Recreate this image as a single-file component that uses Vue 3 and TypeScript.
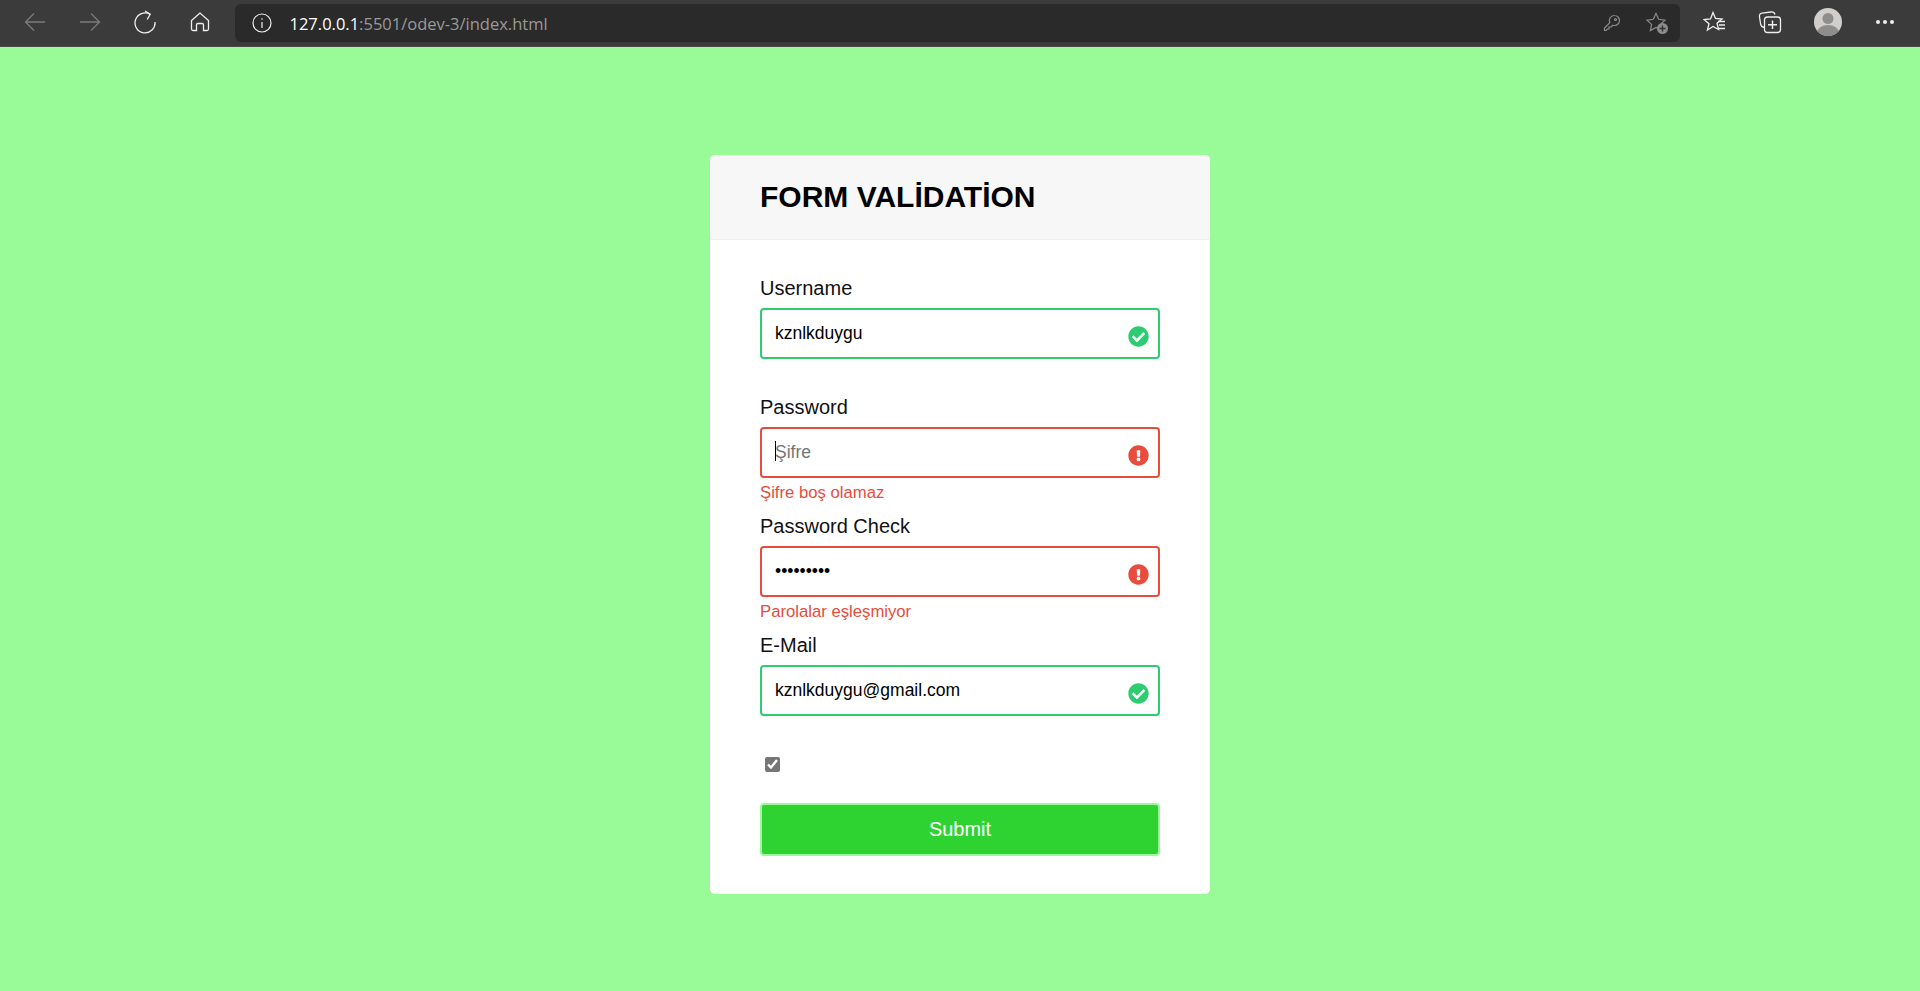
<script setup lang="ts">
interface Field {
  label: string
  type: string
  value: string
  placeholder?: string
  state: 'ok' | 'bad'
  error?: string
  caret?: boolean
}
const fields: Field[] = [
  { label: 'Username', type: 'text', value: 'kznlkduygu', state: 'ok' },
  { label: 'Password', type: 'password', value: '', placeholder: 'Şifre', state: 'bad', error: 'Şifre boş olamaz', caret: true },
  { label: 'Password Check', type: 'password', value: 'abcdefghi', state: 'bad', error: 'Parolalar eşleşmiyor' },
  { label: 'E-Mail', type: 'email', value: 'kznlkduygu@gmail.com', state: 'ok' },
]
const okPath = 'M504 256c0 136.967-111.033 248-248 248S8 392.967 8 256 119.033 8 256 8s248 111.033 248 248zM227.314 387.314l184-184c6.248-6.248 6.248-16.379 0-22.627l-22.627-22.627c-6.248-6.249-16.379-6.249-22.628 0L216 308.118l-70.059-70.059c-6.248-6.248-16.379-6.248-22.628 0l-22.627 22.627c-6.248 6.248-6.248 16.379 0 22.627l104 104c6.249 6.249 16.379 6.249 22.628.001z'
const badPath = 'M504 256c0 136.997-111.043 248-248 248S8 392.997 8 256C8 119.083 119.043 8 256 8s248 111.083 248 248zm-248 50c-25.405 0-46 20.595-46 46s20.595 46 46 46 46-20.595 46-46-20.595-46-46-46zm-43.673-165.346l7.418 136c.347 6.364 5.609 11.346 11.982 11.346h48.546c6.373 0 11.635-4.982 11.982-11.346l7.418-136c.375-6.874-5.098-12.654-11.982-12.654h-63.383c-6.884 0-12.356 5.78-11.981 12.654z'
</script>

<template>
  <div class="page">
    <header class="toolbar">
      <div class="nav">
        <span class="tb"><svg width="24" height="24" viewBox="0 0 24 24" fill="none" stroke="#7b7b7b" stroke-width="1.3"><path d="M22 12H2.5M11 3.5 2.5 12l8.500 8.500" /></svg></span>
        <span class="tb"><svg width="24" height="24" viewBox="0 0 24 24" fill="none" stroke="#7b7b7b" stroke-width="1.3"><path d="M2 12h19.500M13 3.500l8.500 8.500-8.500 8.500" /></svg></span>
        <span class="tb"><svg width="24" height="24" viewBox="0 0 24 24" fill="none" stroke="#eee" stroke-width="1.3"><path d="M17 4.200A10 10 0 1 0 22 12" /><path d="M12 1l5.200 3.200-3 5.300" /></svg></span>
        <span class="tb"><svg width="22" height="22" viewBox="0 0 22 22" fill="none" stroke="#eee" stroke-width="1.300"><path d="M11 2 2.500 9.500V18a1.500 1.500 0 0 0 1.500 1.500h3.500V14a1.500 1.500 0 0 1 1.500-1.500h4a1.500 1.500 0 0 1 1.500 1.500v5.500H18a1.500 1.500 0 0 0 1.500-1.500V9.500z" /></svg></span>
      </div>
      <div class="urlbar">
        <svg class="info" width="20" height="20" viewBox="0 0 20 20" fill="none" stroke="#eee" stroke-width="1.200"><circle cx="10" cy="10" r="9" /><path d="M10 9v6M10 5.200v1.600" /></svg>
        <span class="url"><b>127.0.0.1</b>:5501/odev-3/index.html</span>
        <span class="grow"></span>
        <svg class="key" width="18" height="18" viewBox="0 0 18 18" fill="none" stroke="#8c8c8c" stroke-width="1.200"><path d="M11.500 1.500a5 5 0 0 1 0 10c-.6 0-1.100-.1-1.600-.3L8 13H6v2H4.500l-1.500 1.500H1.500V14l5.300-5.300A5 5 0 0 1 11.500 1.500z" /><circle cx="12.500" cy="5.500" r="1" /></svg>
        <svg class="star" width="24" height="24" viewBox="0 0 24 24" fill="none"><path d="M11 2.500l2.700 5.800 6.300.8-4.600 4.300 1.200 6.200L11 16.500l-5.600 3.100 1.200-6.200L2 9.100l6.300-.8z" stroke="#8c8c8c" stroke-width="1.200" /><circle cx="17.500" cy="17.500" r="5.500" fill="#8c8c8c" /><path d="M17.500 14.500v6M14.500 17.500h6" stroke="#333" stroke-width="1.500" /></svg>
      </div>
      <div class="tools">
        <span class="tb"><svg width="24" height="24" viewBox="0 0 24 24" fill="none" stroke="#eee" stroke-width="1.300"><path d="M10 2.500l2.500 6 6.500.5-5 4.200 1.600 6.300L10 16.500 4.400 20 6 13.700 1 9.500l6.500-.5z" /><path d="M15 11.500h7M16 15h6M16 18.500h6" /></svg></span>
        <span class="tb"><svg width="24" height="24" viewBox="0 0 24 24" fill="none" stroke="#eee" stroke-width="1.300"><path d="M6 17.500C4 17 3 16 2.700 14.500L1.500 7C1.200 5 2 3.500 4 3.200l9-1.200c2-.2 3.500.8 4 2.500" /><rect x="6.500" y="7" width="16" height="15.500" rx="3" /><path d="M14.500 10.500v8.500M10 14.800h9" stroke-width="1.500" /></svg></span>
        <span class="tb avatar-slot"><svg width="28" height="28" viewBox="0 0 28 28"><defs><clipPath id="av"><circle cx="14" cy="14" r="14" /></clipPath></defs><g clip-path="url(#av)"><rect width="28" height="28" fill="#d0cfcc" /><circle cx="14" cy="10.500" r="5.500" fill="#8f8d8b" /><ellipse cx="14" cy="25" rx="11" ry="8" fill="#8f8d8b" /></g></svg></span>
        <span class="tb dots"><i></i><i></i><i></i></span>
      </div>
    </header>

    <main class="main">
      <section class="card">
        <div class="card-head"><h2>FORM VALİDATİON</h2></div>
        <form class="form" @submit.prevent>
          <div v-for="f in fields" :key="f.label" class="field" :class="f.state">
            <label>{{ f.label }}</label>
            <div class="box">
              <input :type="f.type" :value="f.value" :placeholder="f.placeholder" readonly />
              <span v-if="f.caret" class="caret"></span>
              <svg class="mark" width="21" height="21" viewBox="0 0 512 512"><path :d="f.state === 'ok' ? okPath : badPath" fill="currentColor" /></svg>
            </div>
            <small>{{ f.error || '&nbsp;' }}</small>
          </div>
          <div class="agree"><input type="checkbox" checked /></div>
          <button type="submit">Submit</button>
        </form>
      </section>
    </main>
  </div>
</template>

<style>
html, body { margin: 0; background: #98fb98; }
</style>

<style scoped>
.page {
  min-height: 991px;
  background: #98fb98;
  font-family: "Liberation Sans", Arial, sans-serif;
  display: flex;
  flex-direction: column;
}
.toolbar {
  height: 47px;
  box-sizing: border-box;
  background: #3b3b3b;
  border-bottom: 1px solid #4a4a4a;
  display: flex;
  align-items: center;
  padding: 0 9px 3px 7.500px;
}
.nav, .tools { display: flex; align-items: center; }
.tb {
  width: 55px;
  height: 40px;
  display: flex;
  align-items: center;
  justify-content: center;
}
.urlbar {
  flex: 1;
  height: 38px;
  margin: 3px 7px 0 7px;
  background: #2a2a2a;
  border-radius: 6px;
  display: flex;
  align-items: center;
  padding: 0 11px 0 17px;
}
.info { margin-right: 18px; }
.url {
  font-family: "Open Sans", "Noto Sans", sans-serif;
  font-size: 16.500px;
  color: #9a9a9a;
  white-space: nowrap;
}
.url b { font-weight: 400; color: #fff; }
.grow { flex: 1; }
.key { margin-right: 24px; }
.avatar-slot { width: 61px; }
.dots { width: 53px; gap: 3px; }
.dots i {
  width: 4px;
  height: 4px;
  border-radius: 50%;
  background: #eee;
}
.main {
  display: flex;
  justify-content: center;
  padding-top: 108px;
}
.card {
  width: 500px;
  background: #fff;
  border-radius: 5px;
  overflow: hidden;
}
.card-head {
  background: #f7f7f7;
  border-bottom: 1px solid #f0f0f0;
  padding: 0 50px;
  height: 85px;
  box-sizing: border-box;
  display: flex;
  align-items: center;
}
h2 {
  margin: 0;
  font-size: 30px;
  font-weight: 700;
  color: #000;
}
.form { padding: 38px 50px 38px; }
.field { margin-bottom: 0; }
.field label {
  display: block;
  font-size: 20px;
  line-height: 21px;
  margin-bottom: 9px;
  color: #111;
}
.box { position: relative; }
.box input {
  display: block;
  width: 100%;
  box-sizing: border-box;
  height: 51px;
  border: 2px solid #f0f0f0;
  border-radius: 4px;
  padding: 0 13px;
  font-family: inherit;
  font-size: 17.500px;
  outline: none;
  background: #fff;
  color: #000;
}
.mark {
  position: absolute;
  right: 11.500px;
  top: 18px;
}
.caret {
  position: absolute;
  left: 15px;
  top: 14px;
  width: 1px;
  height: 20px;
  background: #000;
}
.ok .box input { border-color: #2ecc71; }
.ok .mark { color: #2ecc71; }
.bad .box input { border-color: #e74c3c; }
.bad .mark { color: #e74c3c; }
.field small {
  display: block;
  height: 38px;
  line-height: 30px;
  font-size: 16.700px;
  color: #e74c3c;
}
.agree {
  display: flex;
  height: 34px;
  margin-top: -7px;
  align-items: center;
}
.agree input {
  width: 15px;
  height: 15px;
  margin: 0 0 0 5px;
  accent-color: #767676;
}
button {
  display: block;
  width: 100%;
  height: 53px;
  margin-top: 22px;
  background: #2fd331;
  border: 2px solid #98fb98;
  border-radius: 4px;
  color: #fff;
  font-family: inherit;
  font-size: 20px;
}
</style>
